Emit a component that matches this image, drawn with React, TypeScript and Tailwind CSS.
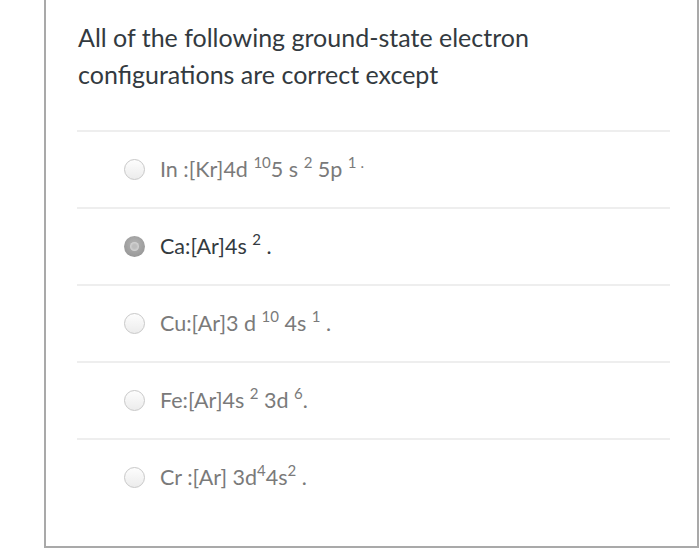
import React from "react";

type Opt = { parts: React.ReactNode; selected?: boolean };

const Sup = ({ children }: { children: React.ReactNode }) => (
  <sup className="text-[15px] top-[-0.6em]">{children}</sup>
);

function Radio({ selected }: { selected?: boolean }) {
  if (selected) {
    return (
      <span className="w-[21px] h-[21px] rounded-full bg-[radial-gradient(circle_at_50%_40%,#b5b5b5,#8f8f8f)] flex items-center justify-center shrink-0">
        <span className="w-[9px] h-[9px] rounded-full bg-[radial-gradient(circle,#bdbdbd_30%,#e6e6e6_100%)]" />
      </span>
    );
  }
  return (
    <span className="w-[21px] h-[21px] rounded-full border border-[#c8c8c8] bg-[linear-gradient(#fdfdfd,#ececec)] shrink-0" />
  );
}

export default function App() {
  const options: Opt[] = [
    {
      parts: (
        <>
          In :[Kr]4d <Sup>10</Sup>5 s <Sup>2</Sup> 5p <Sup>1 .</Sup>
        </>
      ),
    },
    {
      selected: true,
      parts: (
        <>
          Ca:[Ar]4s <Sup>2</Sup> .
        </>
      ),
    },
    {
      parts: (
        <>
          Cu:[Ar]3 d <Sup>10</Sup> 4s <Sup>1</Sup> .
        </>
      ),
    },
    {
      parts: (
        <>
          Fe:[Ar]4s <Sup>2</Sup> 3d <Sup>6</Sup>.
        </>
      ),
    },
    {
      parts: (
        <>
          Cr :[Ar] 3d<Sup>4</Sup>4s<Sup>2</Sup> .
        </>
      ),
    },
  ];

  return (
    <div
      className="w-[700px] h-[549px] bg-white overflow-hidden"
      style={{ fontFamily: "Lato, 'Open Sans', sans-serif" }}
    >
      <div className="ml-[44px] w-[655px] h-[548px] border-l-2 border-r-2 border-b-2 border-[#a9a9a9] pl-[31px] pr-[27px] pt-[19px]">
        <div className="pl-[1px] text-[25px] leading-[37px] text-[#333a40]">
          All of the following ground-state electron
          <br />
          configurations are correct except
        </div>
        <div className="mt-[37px]">
          {options.map((o, i) => (
            <div
              key={i}
              className="h-[77px] border-t-2 border-[#eeeeee] flex items-center pl-[47px]"
            >
              <Radio selected={o.selected} />
              <span
                className={`ml-[15px] text-[21.5px] leading-none ${
                  o.selected ? "text-[#333a40]" : "text-[#7a7a7a]"
                }`}
              >
                {o.parts}
              </span>
            </div>
          ))}
        </div>
      </div>
    </div>
  );
}
